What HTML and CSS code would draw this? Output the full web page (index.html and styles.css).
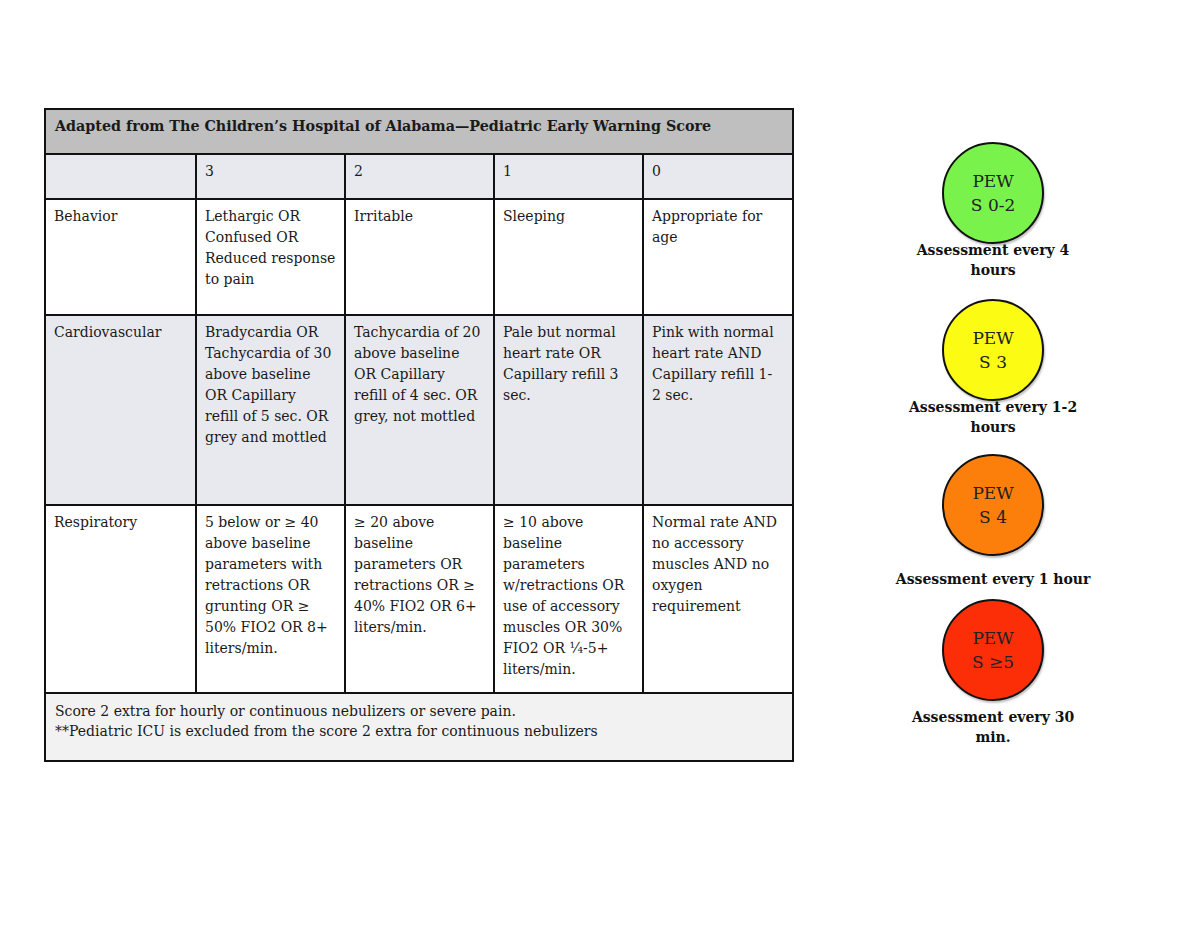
FILE: index.html
```html
<!DOCTYPE html>
<html lang="en">
<head>
<meta charset="utf-8">
<title>Pediatric Early Warning Score</title>
<link rel="stylesheet" href="styles.css">
</head>
<body>
<div class="page">
  <table class="pews">
    <colgroup>
      <col class="c1"><col class="c2"><col class="c3"><col class="c4"><col class="c5">
    </colgroup>
    <tr class="r-title">
      <th colspan="5">Adapted from The Children’s Hospital of Alabama—Pediatric Early Warning Score</th>
    </tr>
    <tr class="r-score shaded">
      <td></td><td>3</td><td>2</td><td>1</td><td>0</td>
    </tr>
    <tr class="r-beh">
      <td>Behavior</td>
      <td>Lethargic OR<br>Confused OR<br>Reduced response<br>to pain</td>
      <td>Irritable</td>
      <td>Sleeping</td>
      <td>Appropriate for<br>age</td>
    </tr>
    <tr class="r-card shaded">
      <td>Cardiovascular</td>
      <td>Bradycardia OR<br>Tachycardia of 30<br>above baseline<br>OR Capillary<br>refill of 5 sec. OR<br>grey and mottled</td>
      <td>Tachycardia of 20<br>above baseline<br>OR Capillary<br>refill of 4 sec. OR<br>grey, not mottled</td>
      <td>Pale but normal<br>heart rate OR<br>Capillary refill 3<br>sec.</td>
      <td>Pink with normal<br>heart rate AND<br>Capillary refill 1-<br>2 sec.</td>
    </tr>
    <tr class="r-resp">
      <td>Respiratory</td>
      <td>5 below or ≥ 40<br>above baseline<br>parameters with<br>retractions OR<br>grunting OR ≥<br>50% FIO2 OR 8+<br>liters/min.</td>
      <td>≥ 20 above<br>baseline<br>parameters OR<br>retractions OR ≥<br>40% FIO2 OR 6+<br>liters/min.</td>
      <td>≥ 10 above<br>baseline<br>parameters<br>w/retractions OR<br>use of accessory<br>muscles OR 30%<br>FIO2 OR ¼-5+<br>liters/min.</td>
      <td>Normal rate AND<br>no accessory<br>muscles AND no<br>oxygen<br>requirement</td>
    </tr>
    <tr class="r-foot">
      <td colspan="5">Score 2 extra for hourly or continuous nebulizers or severe pain.<br>**Pediatric ICU is excluded from the score 2 extra for continuous nebulizers</td>
    </tr>
  </table>

  <div class="legend">
    <div class="level level-1">
      <div class="dot green">PEW<br>S 0-2</div>
      <div class="label">Assessment every 4<br>hours</div>
    </div>
    <div class="level level-2">
      <div class="dot yellow">PEW<br>S 3</div>
      <div class="label">Assessment every 1-2<br>hours</div>
    </div>
    <div class="level level-3">
      <div class="dot orange">PEW<br>S 4</div>
      <div class="label">Assessment every 1 hour</div>
    </div>
    <div class="level level-4">
      <div class="dot red">PEW<br>S ≥5</div>
      <div class="label">Assessment every 30<br>min.</div>
    </div>
  </div>
</div>
</body>
</html>
```

FILE: styles.css
```css
html, body {
  margin: 0;
  padding: 0;
  background: #ffffff;
}

.page {
  display: flex;
  align-items: flex-start;
  padding: 108px 0 0 44px;
  font-family: "DejaVu Serif", "Liberation Serif", serif;
  color: #1a1a1a;
}

.pews {
  border-collapse: collapse;
  table-layout: fixed;
  width: 750px;
  font-size: 14px;
  line-height: 21px;
}

.pews .c1 { width: 151px; }
.pews .c2 { width: 149px; }
.pews .c3 { width: 149px; }
.pews .c4 { width: 149px; }
.pews .c5 { width: 150px; }

.pews th,
.pews td {
  border: 2px solid #111111;
  padding: 6px 7px 0 8px;
  vertical-align: top;
  text-align: left;
  white-space: nowrap;
  overflow: hidden;
}

.pews th {
  background: #bfbfbf;
  font-weight: bold;
  font-size: 14.3px;
  padding-left: 9px;
}

.shaded td {
  background: #e8e9ee;
}

.r-title th { height: 37px; }
.r-score td { height: 37px; }
.r-beh td { height: 108px; }
.r-card td { height: 182px; }
.r-resp td { height: 180px; }

.r-foot td {
  background: #f2f2f2;
  height: 59px;
  padding-top: 7px;
  padding-left: 9px;
  line-height: 20px;
}

.legend {
  margin-left: 99px;
  width: 200px;
  display: flex;
  flex-direction: column;
  align-items: center;
}

.level {
  display: flex;
  flex-direction: column;
  align-items: center;
}

.dot {
  width: 98px;
  height: 98px;
  border: 2px solid #111111;
  border-radius: 50%;
  box-shadow: 1px 2px 2px rgba(0, 0, 0, 0.25);
  display: flex;
  align-items: center;
  justify-content: center;
  text-align: center;
  font-size: 17px;
  line-height: 24px;
  color: #222222;
}

.green { background: #79f24b; }
.yellow { background: #fbfb14; }
.orange { background: #fd7f0b; }
.red { background: #fb2e08; }

.label {
  font-weight: bold;
  font-size: 14px;
  line-height: 20px;
  text-align: center;
  white-space: nowrap;
  color: #111111;
}

.level-1 { margin-top: 34px; }
.level-1 .label { margin-top: -4px; }

.level-2 { margin-top: 19px; }
.level-2 .label { margin-top: -4px; }

.level-3 { margin-top: 17px; }
.level-3 .label { margin-top: 13px; }

.level-4 { margin-top: 10px; }
.level-4 .label { margin-top: 6px; }
```
